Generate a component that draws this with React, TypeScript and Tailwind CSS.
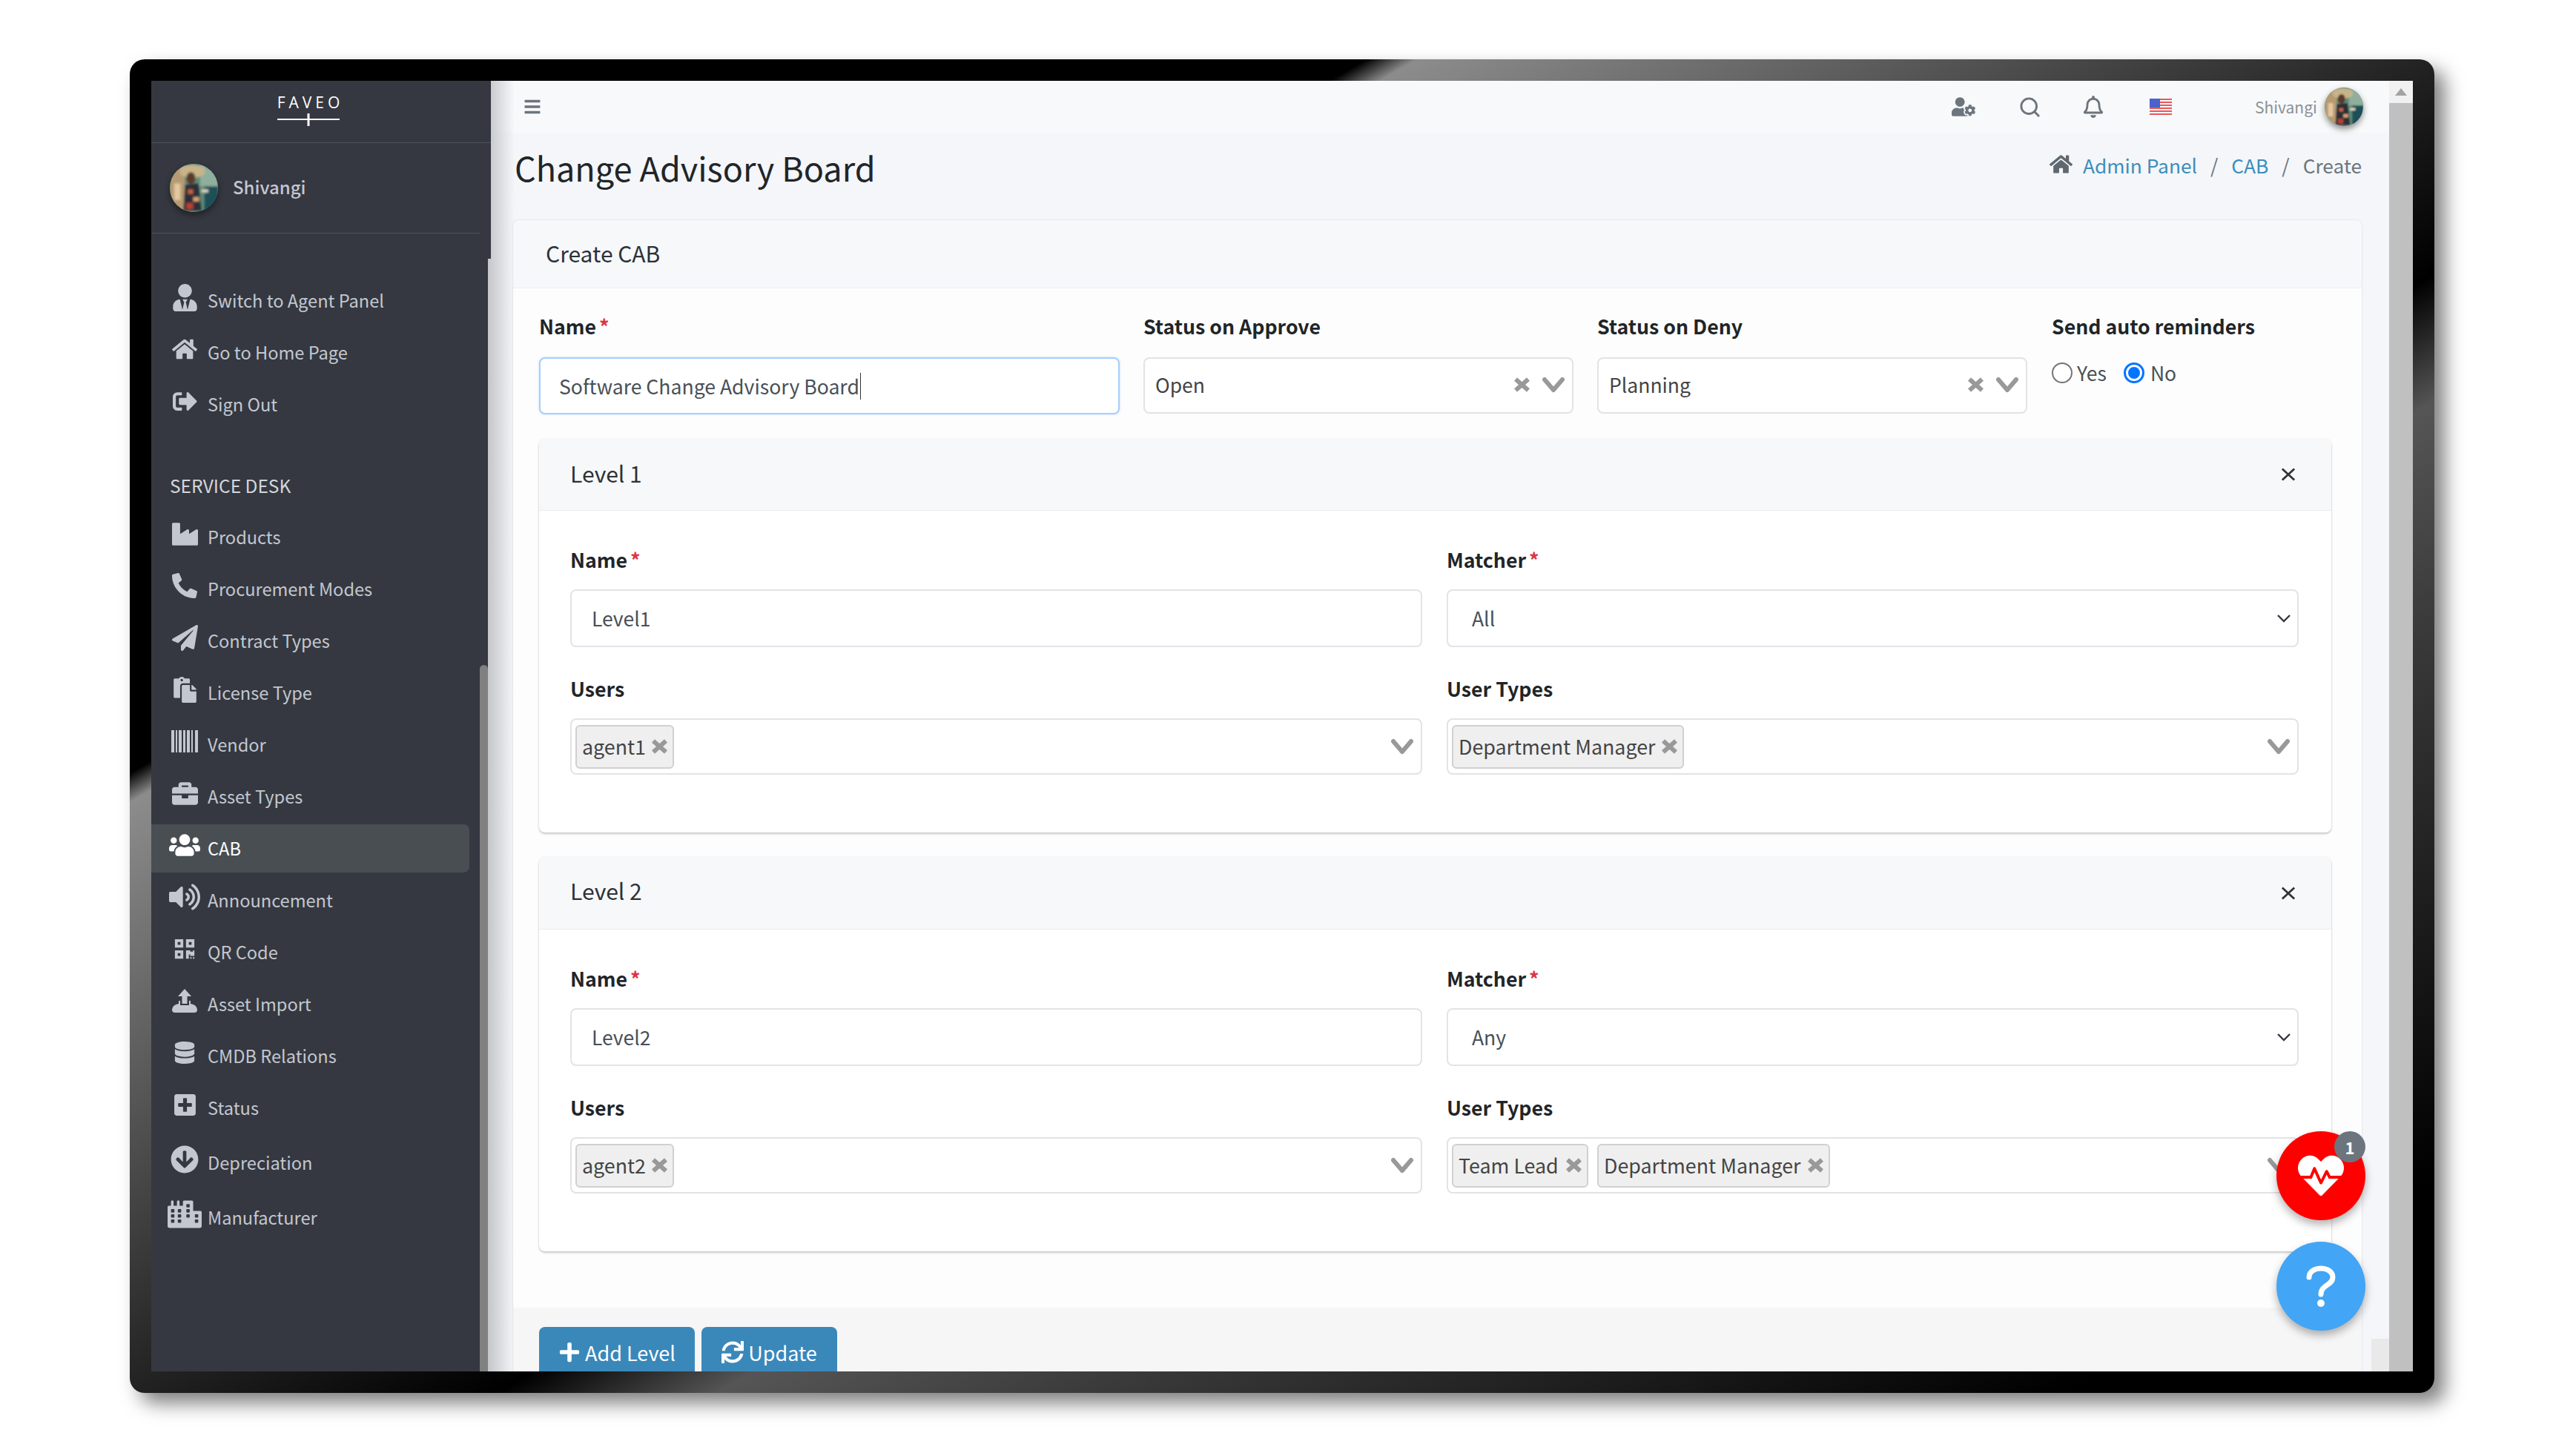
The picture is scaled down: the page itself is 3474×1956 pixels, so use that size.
import React from "react";
import {
  FaUserTie, FaHome, FaSignOutAlt, FaIndustry, FaPhoneAlt, FaPaperPlane, FaPaste, FaBriefcase,
  FaUsers, FaVolumeUp, FaQrcode, FaDatabase, FaPlusSquare, FaArrowCircleDown, FaCity, FaBars, FaUserCog,
  FaPlus, FaSync, FaHeartbeat, FaRegBell,
} from "react-icons/fa";
import { Search } from "lucide-react";

const font = { fontFamily: '"Noto Sans CJK SC", "Source Sans Pro", "Noto Sans", sans-serif' };

function Avatar({ className }: { className: string }) {
  return (
    <div className={"rounded-full overflow-hidden shrink-0 shadow-[0_4px_8px_rgba(0,0,0,0.45)] " + className}>
      <svg viewBox="0 0 64 64" className="w-full h-full block" preserveAspectRatio="none">
        <defs>
          <filter id="avblur"><feGaussianBlur stdDeviation="1.4" /></filter>
        </defs>
        <rect width="64" height="64" fill="#5f8a78" />
        <g filter="url(#avblur)">
          <rect x="0" y="0" width="20" height="64" fill="#b79a72" />
          <rect x="40" y="0" width="24" height="30" fill="#8fae9c" />
          <rect x="46" y="30" width="18" height="34" fill="#1f4f58" />
          <ellipse cx="30" cy="10" rx="17" ry="9" fill="#c8b48a" />
          <ellipse cx="28" cy="19" rx="6" ry="8" fill="#5a3a2a" />
          <path d="M20 28 L38 26 L42 62 L18 62 Z" fill="#2a2f38" />
          <rect x="24" y="34" width="7" height="6" fill="#c7603c" />
          <rect x="31" y="44" width="8" height="6" fill="#d9a173" />
          <rect x="22" y="52" width="9" height="8" fill="#b9412f" />
          <rect x="6" y="26" width="8" height="22" fill="#e2c9a0" />
          <rect x="42" y="34" width="9" height="4" fill="#e8d8c0" />
        </g>
      </svg>
    </div>
  );
}

function UploadTray({ size }: { size: number }) {
  return (
    <svg width={size} height={size} viewBox="0 0 36 36" fill="#c2c7d0">
      <path d="M18 2 L27 12 L21.5 12 L21.5 22 L14.5 22 L14.5 12 L9 12 Z" />
      <path d="M10 18 L10 22 Q2 23 1 30 Q1 34 5 34 L31 34 Q35 34 35 30 Q34 23 26 22 L26 18 L24 18 L24 24 L12 24 L12 18 Z" />
    </svg>
  );
}

function Barcode() {
  return (
    <svg width="36" height="30" viewBox="0 0 36 30" fill="#c2c7d0">
      <rect x="0" width="4" height="30" />
      <rect x="6" width="2" height="30" />
      <rect x="10" width="4" height="30" />
      <rect x="16" width="3" height="30" />
      <rect x="21" width="4" height="30" />
      <rect x="27" width="2" height="30" />
      <rect x="32" width="4" height="30" />
    </svg>
  );
}

function ThickX({ w = 23, h = 20, color = "#999", sw = 6 }: { w?: number; h?: number; color?: string; sw?: number }) {
  return (
    <svg width={w} height={h} viewBox="0 0 23 20" className="shrink-0" preserveAspectRatio="none">
      <path d="M3 2.5 L20 17.5 M20 2.5 L3 17.5" fill="none" stroke={color} strokeWidth={sw} strokeLinecap="butt" />
    </svg>
  );
}

const menuTop = [
  { label: "Switch to Agent Panel", icon: <FaUserTie size={37} /> },
  { label: "Go to Home Page", icon: <FaHome size={34} /> },
  { label: "Sign Out", icon: <FaSignOutAlt size={33} /> },
];
const menuDesk = [
  { label: "Products", icon: <FaIndustry size={35} /> },
  { label: "Procurement Modes", icon: <FaPhoneAlt size={34} /> },
  { label: "Contract Types", icon: <FaPaperPlane size={35} /> },
  { label: "License Type", icon: <FaPaste size={35} /> },
  { label: "Vendor", icon: <Barcode /> },
  { label: "Asset Types", icon: <FaBriefcase size={35} /> },
  { label: "CAB", icon: <FaUsers size={42} />, active: true },
  { label: "Announcement", icon: <FaVolumeUp size={42} /> },
  { label: "QR Code", icon: <FaQrcode size={30} /> },
  { label: "Asset Import", icon: <UploadTray size={36} /> },
  { label: "CMDB Relations", icon: <FaDatabase size={30} /> },
  { label: "Status", icon: <FaPlusSquare size={33} /> },
  { label: "Depreciation", icon: <FaArrowCircleDown size={38} />, extra: "mt-[4px]" },
  { label: "Manufacturer", icon: <FaCity size={46} />, extra: "mt-[4px]" },
];

function MenuRow({ label, icon, active, extra }: { label: string; icon: React.ReactNode; active?: boolean; extra?: string }) {
  return (
    <div className={"h-[70px] flex items-center shrink-0 " + (extra || "")}>
      <div className={"h-[65px] w-[429px] rounded-r-lg flex items-center pl-[15px] " + (active ? "bg-[#494e53] text-white" : "text-[#c2c7d0]")}>
        <div className="w-[60px] h-[40px] mb-[8px] flex items-center justify-center shrink-0">{icon}</div>
        <span className="ml-[1px] text-[23.6px] leading-[32px]">{label}</span>
      </div>
    </div>
  );
}

function Sidebar() {
  return (
    <div className="w-[458px] shrink-0 flex flex-col relative z-20">
      <div className="bg-[#353840] h-[240px] shrink-0 flex flex-col">
        <div className="h-[84px] border-b border-[#4b545c] flex flex-col items-center pt-[16px] pr-[34px]">
          <div className="text-white text-[21px] leading-[26px] tracking-[5px] pl-[5px] font-normal" style={{ fontFamily: '"Open Sans", sans-serif' }}>FAVEO</div>
          <svg width="86" height="20" viewBox="0 0 86 20" className="mt-[1px]">
            <path d="M1 9 H85" stroke="#fff" strokeWidth="2" />
            <path d="M43 1 V18" stroke="#fff" strokeWidth="3" />
          </svg>
        </div>
        <div className="h-[122px] border-b border-[#4b545c] flex items-center pl-[24px] w-[442px] ml-[1px]">
          <Avatar className="w-[65px] h-[65px]" />
          <span className="ml-[20px] text-[24px] leading-[32px] font-medium text-[#c2c7d0] mb-[4px]">Shivangi</span>
        </div>
      </div>
      <div className="flex-1 w-[454px] bg-[#353840] relative pt-[21px] overflow-hidden">
        {menuTop.map((m) => <MenuRow key={m.label} {...m} />)}
        <div className="h-[68px] mt-[41px] flex items-center pl-[25px] text-[24.5px] leading-[32px] text-[#d3d6dc]">SERVICE DESK</div>
        {menuDesk.map((m) => <MenuRow key={m.label} {...m} />)}
        <div className="absolute left-[443px] top-[548px] bottom-0 w-[11px] bg-[#808080] rounded-t-md" />
      </div>
    </div>
  );
}

function BigChevron() {
  return (
    <svg width={30} height={22} viewBox="0 0 30 22" className="shrink-0">
      <path d="M3 4 L15 18 L27 4" fill="none" stroke="#999" strokeWidth="6" strokeLinejoin="round" strokeLinecap="round" />
    </svg>
  );
}

function Label({ text, req }: { text: string; req?: boolean }) {
  return (
    <div className="h-[36px] leading-[36px] text-[26.7px] font-bold text-[#1f2529] whitespace-nowrap">
      {text}
      {req && <span className="text-[#dc3545] ml-[4px]">*</span>}
    </div>
  );
}

function Tag({ text, width }: { text: string; width: string }) {
  return (
    <div className={"h-[59px] rounded-md border-2 border-[#d0d0d0] bg-[#efefef] flex items-center justify-between pl-[13px] pr-[6px] text-[26.8px] leading-[34px] text-[#444] " + width}>
      <span className="whitespace-nowrap -ml-[6px]">{text}</span>
      <ThickX />
    </div>
  );
}

function MultiSelect({ tags }: { tags: { text: string; width: string }[] }) {
  return (
    <div className="h-[76px] rounded-lg border-2 border-[#e3e3e3] bg-white flex items-center pl-[5px] pr-[10px]">
      <div className="flex-1 flex gap-[12px]">
        {tags.map((t) => <Tag key={t.text} {...t} />)}
      </div>
      <BigChevron />
    </div>
  );
}

function Field({ value, chevron }: { value: string; chevron?: boolean }) {
  return (
    <div className="h-[78px] rounded-lg border-2 border-[#e1e4e8] bg-white flex items-center justify-between pl-[32px] pr-[8px] text-[26.5px] leading-[34px] text-[#495057]">
      <span className={chevron ? "" : "-ml-[5px]"}>{value}</span>
      {chevron && (
        <svg width="20" height="12" viewBox="0 0 20 12"><path d="M2 2 L10 10 L18 2" fill="none" stroke="#343a40" strokeWidth="2.4" /></svg>
      )}
    </div>
  );
}

function LevelCard({ title, name, matcher, users, types, headerH, titleMb, extra }: {
  title: string; name: string; matcher: string; users: { text: string; width: string }[];
  types: { text: string; width: string }[]; headerH: string; titleMb: string; extra?: string;
}) {
  return (
    <div className={"w-full rounded-lg bg-white shadow-[0_2px_3px_rgba(0,0,0,0.2),0_0_2px_rgba(0,0,0,0.1)] " + (extra || "")}>
      <div className={"bg-[#f7f8fa] rounded-t-lg border-b border-[#ececec] flex items-center justify-between pl-[42px] pr-[47px] " + headerH}>
        <span className={"text-[30px] leading-[38px] text-[#2c3238] " + titleMb}>{title}</span>
        <ThickX w={22} h={20} color="#333" sw={3} />
      </div>
      <div className="pt-[48px] pb-[78px] pl-[42px] pr-[44px] grid grid-cols-2 gap-x-[33px]">
        <div>
          <Label text="Name" req />
          <div className="mt-[22px]"><Field value={name} /></div>
          <div className="mt-[38px]"><Label text="Users" /></div>
          <div className="mt-[22px]"><MultiSelect tags={users} /></div>
        </div>
        <div>
          <Label text="Matcher" req />
          <div className="mt-[22px]"><Field value={matcher} chevron /></div>
          <div className="mt-[38px]"><Label text="User Types" /></div>
          <div className="mt-[22px]"><MultiSelect tags={types} /></div>
        </div>
      </div>
    </div>
  );
}

function StatusSelect({ label, value }: { label: string; value: string }) {
  return (
    <div className="w-[580px] shrink-0">
      <Label text={label} />
      <div className="h-[76px] mt-[24px] rounded-lg border-2 border-[#e3e3e3] bg-white flex items-center pl-[14px] pr-[10px] pb-[2px] text-[26.5px] leading-[34px] text-[#444]">
        <span className="flex-1">{value}</span>
        <ThickX />
        <span className="w-[16px]" />
        <BigChevron />
      </div>
    </div>
  );
}

function Flag() {
  return (
    <svg width="30" height="22" viewBox="0 0 30 22" className="shrink-0">
      <rect width="30" height="22" fill="#f4f4f8" />
      {[0, 4, 8, 12, 16, 20].map((y) => <rect key={y} y={y} width="30" height="2" fill="#e8595a" />)}
      <rect width="14" height="12" fill="#4a62c9" />
    </svg>
  );
}

export default function App() {
  return (
    <div className="w-[3474px] h-[1956px] bg-white pt-[80px] pl-[175px] overflow-hidden" style={font}>
      <div
        className="w-[3108px] h-[1799px] rounded-[20px] p-[29px] shadow-[14px_14px_26px_rgba(0,0,0,0.5)] bg-[linear-gradient(150deg,#000_26.8%,#8c8c8c_27.9%,#222_50%,#000_58%,#555_62.8%,#3a3a3a_71%,#000_92%)]"
      >
        <div className="w-full h-full flex relative overflow-hidden bg-[#f4f6f9]">
          <Sidebar />
          <div className="absolute left-[454px] top-0 bottom-0 w-[36px] z-10 bg-[linear-gradient(90deg,#c4c6ca,rgba(244,246,249,0))]" />
          {/* main */}
          <div className="flex-1 min-w-0 flex flex-col">
            <div className="h-[70px] shrink-0 bg-[#f8f9fa] flex items-center text-[#6c757d]">
              <FaBars size={24} className="ml-[44px]" />
              <div className="flex-1" />
              <FaUserCog size={32} className="mr-[58px]" />
              <Search size={31} strokeWidth={2.2} className="mr-[55px]" />
              <FaRegBell size={30} className="mr-[61px]" />
              <Flag />
              <span className="ml-[112px] text-[21px] leading-[32px] text-[#8a9198] w-[85px]">Shivangi</span>
              <Avatar className="w-[52px] h-[52px] ml-[9px] mr-[35px]" />
            </div>
            <div className="h-[118px] shrink-0 flex justify-between pl-[32px] pr-[37px]">
              <div className="text-[45px] leading-[94px] text-[#212529]">Change Advisory Board</div>
              <div className="flex items-center h-[88px] text-[26.3px] leading-[36px] text-[#6c757d]">
                <FaHome size={31} className="mr-[14px] mb-[3px] text-[#5f6871]" />
                <span className="text-[#3c8dbc]">Admin Panel</span>
                <span className="mx-[18px]">/</span>
                <span className="text-[#3c8dbc]">CAB</span>
                <span className="mx-[18px]">/</span>
                <span>Create</span>
              </div>
            </div>
            {/* card */}
            <div className="ml-[30px] w-[2493px] rounded-t-lg shadow-[0_0_2px_rgba(0,0,0,0.2)] bg-white flex-1 min-h-0 overflow-hidden">
              <div className="h-[92px] bg-[#f7f8fa] border-b border-[#eeeeee] flex items-center pl-[44px] pb-[4px]">
                <span className="text-[30px] leading-[38px] text-[#2c3238]">Create CAB</span>
              </div>
              <div className="pt-[33px] pl-[35px] pr-[41px] pb-[76px] bg-[#fdfdfd]">
                <div className="flex">
                  <div className="w-[783px] shrink-0">
                    <Label text="Name" req />
                    <div className="h-[77px] mt-[24px] rounded-lg border-2 border-[#a6d0fb] bg-white flex items-center pl-[25px] text-[26.6px] leading-[34px] text-[#495057] shadow-[0_0_3px_rgba(128,189,255,0.5)]">
                      Software Change Advisory Board
                      <span className="w-[1.5px] h-[36px] bg-[#333] ml-[1px]" />
                    </div>
                  </div>
                  <div className="ml-[32px]"><StatusSelect label="Status on Approve" value="Open" /></div>
                  <div className="ml-[32px]"><StatusSelect label="Status on Deny" value="Planning" /></div>
                  <div className="ml-[33px]">
                    <Label text="Send auto reminders" />
                    <div className="mt-[28px] flex items-center text-[26.5px] leading-[34px] text-[#495057]">
                      <span className="w-[28px] h-[28px] rounded-full border-2 border-[#767676] bg-white" />
                      <span className="ml-[6px]">Yes</span>
                      <span className="ml-[23px] w-[28px] h-[28px] rounded-full border-[3px] border-[#0075ff] bg-white flex items-center justify-center">
                        <span className="w-[16px] h-[16px] rounded-full bg-[#0075ff]" />
                      </span>
                      <span className="ml-[8px]">No</span>
                    </div>
                  </div>
                </div>
                <LevelCard
                  extra="mt-[33px]"
                  headerH="h-[97px]"
                  titleMb="mb-[4px]"
                  title="Level 1"
                  name="Level1"
                  matcher="All"
                  users={[{ text: "agent1", width: "w-[133px]" }]}
                  types={[{ text: "Department Manager", width: "w-[313px]" }]}
                />
                <LevelCard
                  extra="mt-[33px]"
                  headerH="h-[98px]"
                  titleMb="mb-[7px]"
                  title="Level 2"
                  name="Level2"
                  matcher="Any"
                  users={[{ text: "agent2", width: "w-[133px]" }]}
                  types={[{ text: "Team Lead", width: "w-[184px]" }, { text: "Department Manager", width: "w-[314px]" }]}
                />
              </div>
              <div className="h-[120px] bg-[#f6f6f6] pt-[26px] pl-[35px] flex gap-[9px]">
                <div className="w-[210px] h-[80px] rounded-lg bg-[#3a88ba] text-white flex items-start justify-center pt-[17px] text-[27px] leading-[36px]">
                  <FaPlus size={30} className="mr-[6px] mt-[2px]" />Add Level
                </div>
                <div className="w-[183px] h-[80px] rounded-lg bg-[#3a88ba] text-white flex items-start justify-center pt-[17px] text-[27px] leading-[36px]">
                  <FaSync size={30} className="mr-[6px] mt-[2px]" />Update
                </div>
              </div>
            </div>
          </div>
          {/* page scrollbar */}
          <div className="w-[32px] shrink-0 bg-[#c0c0c0] flex flex-col">
            <div className="h-[30px] bg-[#f1f1f1] flex items-center justify-center">
              <svg width="18" height="14" viewBox="0 0 18 14"><path d="M9 2 L17 12 H1 Z" fill="#a3a3a3" /></svg>
            </div>
          </div>
          <div className="absolute right-[32px] bottom-0 w-[24px] h-[44px] bg-[#e9e9e9] z-10" />
          {/* floating buttons */}
          <div className="absolute left-[2866px] top-[1417px] w-[120px] h-[120px] rounded-full bg-[#ff0000] flex items-center justify-center text-white shadow-[0_6px_12px_rgba(0,0,0,0.3)] z-20">
            <FaHeartbeat size={62} />
            <div className="absolute right-0 top-0 w-[42px] h-[42px] rounded-full bg-[#6c757d] text-white text-[22px] leading-[42px] font-bold text-center">1</div>
          </div>
          <div className="absolute left-[2866px] top-[1566px] w-[120px] h-[120px] rounded-full bg-[#42a5f5] flex items-center justify-center text-white shadow-[0_6px_12px_rgba(0,0,0,0.3)] z-20">
            <svg width="40" height="58" viewBox="0 0 40 58" fill="none">
              <path d="M4 17 C4 1 36 1 36 17 C36 28 20 27 20 40" stroke="#fff" strokeWidth="7" strokeLinecap="round" />
              <circle cx="20" cy="52" r="5" fill="#fff" />
            </svg>
          </div>
        </div>
      </div>
    </div>
  );
}
